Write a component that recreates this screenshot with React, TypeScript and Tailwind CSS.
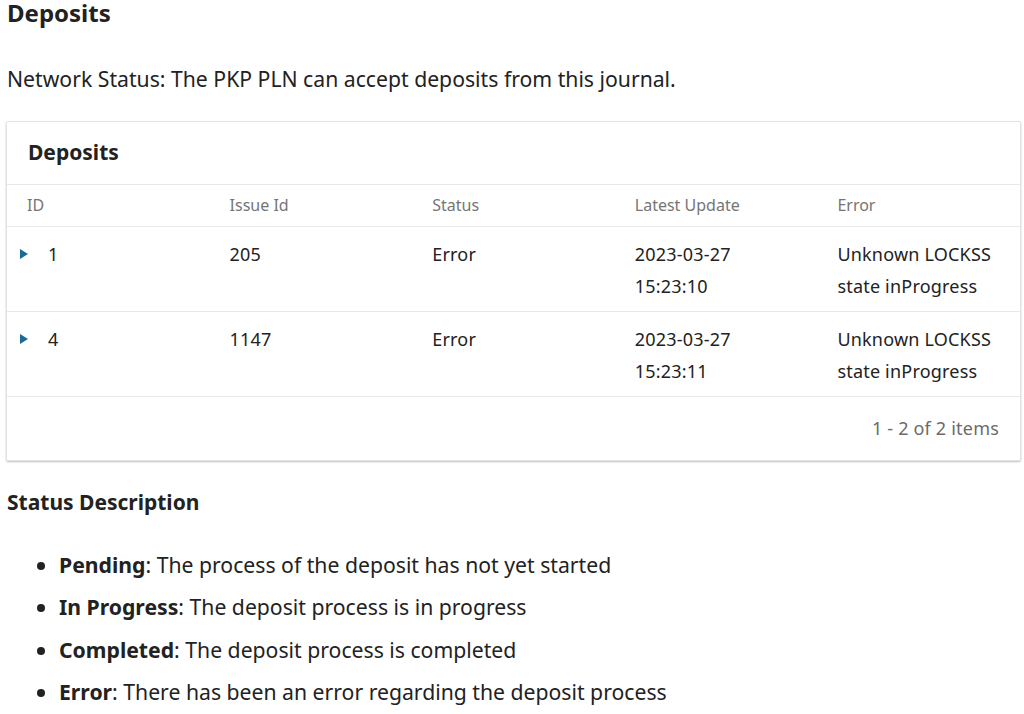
import React from "react";

const rows = [
  { id: "1", issue: "205", status: "Error", date: "2023-03-27", time: "15:23:10", err: "Unknown LOCKSS state inProgress" },
  { id: "4", issue: "1147", status: "Error", date: "2023-03-27", time: "15:23:11", err: "Unknown LOCKSS state inProgress" },
];

function Tri() {
  return (
    <svg width="8" height="10" viewBox="0 0 8 10" className="block">
      <path d="M0 0 L8 5 L0 10 Z" fill="#1b6b94" />
    </svg>
  );
}

export default function App() {
  return (
    <div className="bg-white text-[#222] min-h-[714px] px-[6px]" style={{ fontFamily: '"Noto Sans", sans-serif' }}>
      <h1 className="text-[24px] font-bold leading-[24px] pt-[1px] pl-[1px]">Deposits</h1>
      <p className="text-[21.2px] leading-[28px] mt-[40px] pl-[1px]">
        Network Status: The PKP PLN can accept deposits from this journal.
      </p>
      <div className="mt-[28px] border border-[#e3e3e3] rounded-[2px] shadow-[0_1px_2px_rgba(0,0,0,0.25)] w-[1015px]">
        <div className="h-[63px] flex items-center px-[21px] border-b border-[#e8e8e8]">
          <h2 className="text-[21px] font-bold">Deposits</h2>
        </div>
        <table className="w-full table-fixed border-collapse">
          <thead>
            <tr className="border-b border-[#e8e8e8] h-[41px]">
              {["ID", "Issue Id", "Status", "Latest Update", "Error"].map((h) => (
                <th key={h} className="text-left font-normal text-[16px] text-[#757575] pl-[20px] align-middle">
                  {h}
                </th>
              ))}
            </tr>
          </thead>
          <tbody className="text-[18px] leading-[32px] tracking-[0.2px]">
            {rows.map((r) => (
              <tr key={r.id} className="border-b border-[#e8e8e8]">
                <td className="align-top pt-[11px] pb-[9px] pl-[13px]">
                  <div className="flex items-center">
                    <span className="w-[28px] flex items-center"><Tri /></span>
                    <span>{r.id}</span>
                  </div>
                </td>
                <td className="align-top pt-[11px] pb-[9px] pl-[20px]">{r.issue}</td>
                <td className="align-top pt-[11px] pb-[9px] pl-[20px]">{r.status}</td>
                <td className="align-top pt-[11px] pb-[9px] pl-[20px]">
                  <div>{r.date}</div>
                  <div>{r.time}</div>
                </td>
                <td className="align-top pt-[11px] pb-[9px] pl-[20px] pr-[10px]">{r.err}</td>
              </tr>
            ))}
          </tbody>
        </table>
        <div className="h-[63px] flex items-center justify-end pr-[21px] text-[18px] tracking-[0.2px] text-[#6b6b6b]">
          1 - 2 of 2 items
        </div>
      </div>
      <h3 className="text-[21px] font-bold mt-[27px] pl-[1px] leading-[28px]">Status Description</h3>
      <ul className="list-disc pl-[53px] mt-[35px] text-[21.2px] leading-[28px] space-y-[14.5px]">
        <li><strong>Pending</strong>: The process of the deposit has not yet started</li>
        <li><strong>In Progress</strong>: The deposit process is in progress</li>
        <li><strong>Completed</strong>: The deposit process is completed</li>
        <li><strong>Error</strong>: There has been an error regarding the deposit process</li>
      </ul>
    </div>
  );
}
